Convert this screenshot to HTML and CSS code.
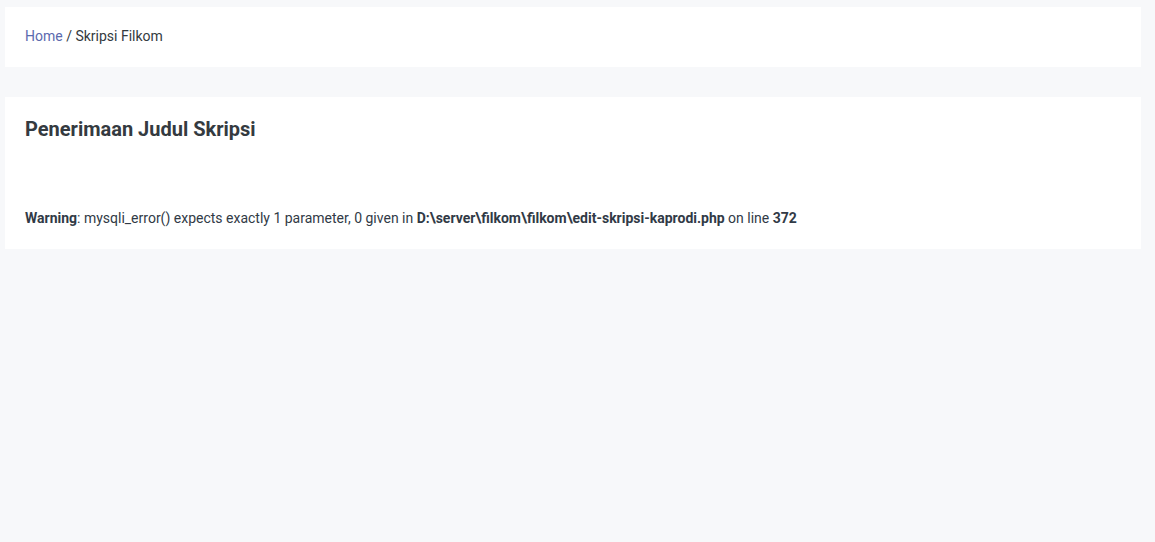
FILE: index.html
```html
<!DOCTYPE html>
<html>
<head>
<meta charset="utf-8">
<link rel="stylesheet" href="styles.css">
</head>
<body>
<div class="page">
  <div class="card breadcrumb">
    <a class="crumb-link" href="#">Home</a> / Skripsi Filkom
  </div>
  <div class="card content">
    <h1 class="title">Penerimaan Judul Skripsi</h1>
    <div class="warning"><b>Warning</b>: mysqli_error() expects exactly 1 parameter, 0 given in <b>D:\server\filkom\filkom\edit-skripsi-kaprodi.php</b> on line <b>372</b></div>
  </div>
</div>
</body>
</html>
```
FILE: styles.css
```css
html, body {
  margin: 0;
  padding: 0;
  background: #f7f8fa;
  font-family: Roboto, "Liberation Sans", Arial, sans-serif;
  color: #313a46;
  font-size: 14px;
}
.page {
  padding: 7px 14px 0 5px;
}
.card {
  background: #fff;
}
.breadcrumb {
  padding: 0 20px;
  height: 60px;
  line-height: 58px;
  color: #343a40;
}
.crumb-link {
  color: #5b6aae;
  text-decoration: none;
}
.content {
  margin-top: 30px;
  padding: 20px 20px 21px;
}
.title {
  margin: 0;
  font-size: 20px;
  font-weight: 700;
  line-height: 24px;
  color: #343a40;
}
.warning {
  margin-top: 67px;
  line-height: 20px;
}
.warning b {
  font-weight: 700;
}
```
